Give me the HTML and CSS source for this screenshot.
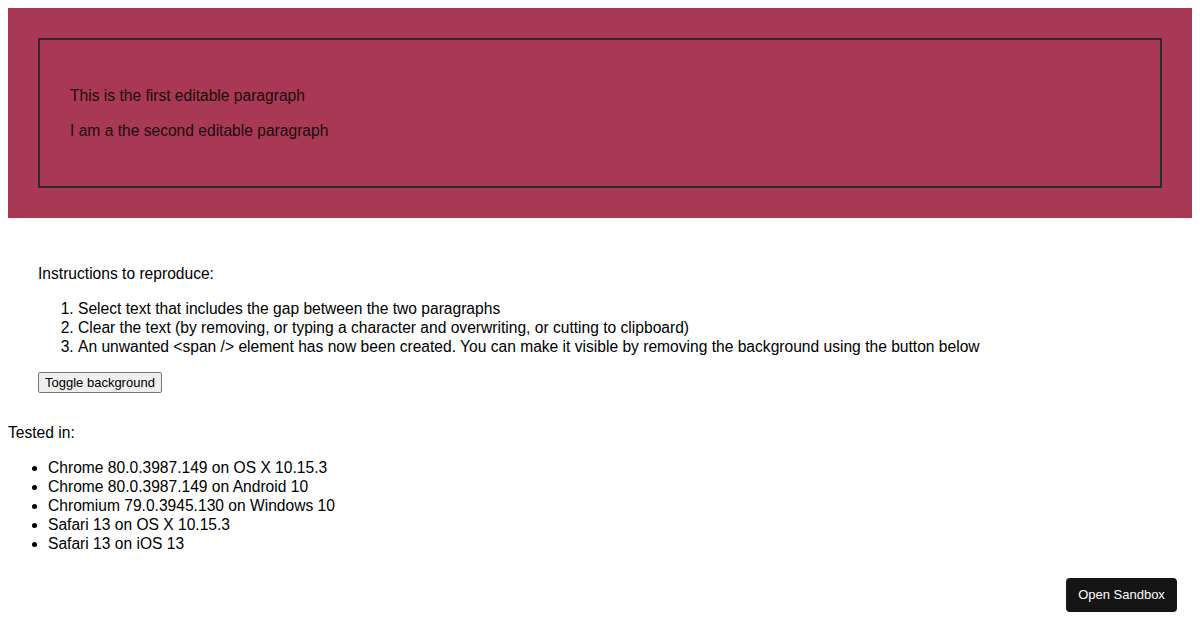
FILE: index.html
```html
<!DOCTYPE html>
<html lang="en">
<head>
<meta charset="utf-8">
<title>Editable paragraphs</title>
<link rel="stylesheet" href="styles.css">
</head>
<body>
<div class="stage">
  <div class="editor">
    <p>This is the first editable paragraph</p>
    <p>I am a the second editable paragraph</p>
  </div>
</div>
<div class="instructions">
  <p>Instructions to reproduce:</p>
  <ol>
    <li>Select text that includes the gap between the two paragraphs</li>
    <li>Clear the text (by removing, or typing a character and overwriting, or cutting to clipboard)</li>
    <li>An unwanted &lt;span /&gt; element has now been created. You can make it visible by removing the background using the button below</li>
  </ol>
  <button class="toggle" type="button">Toggle background</button>
</div>
<div class="tested">Tested in:</div>
<ul class="browsers">
  <li>Chrome 80.0.3987.149 on OS X 10.15.3</li>
  <li>Chrome 80.0.3987.149 on Android 10</li>
  <li>Chromium 79.0.3945.130 on Windows 10</li>
  <li>Safari 13 on OS X 10.15.3</li>
  <li>Safari 13 on iOS 13</li>
</ul>
<a class="open-sandbox" href="#">Open Sandbox</a>
</body>
</html>
```

FILE: styles.css
```css
html, body {
  background: #ffffff;
}
body {
  margin: 8px;
  font-family: "Liberation Sans", Arial, sans-serif;
  font-size: 15.6px;
  line-height: 19px;
  color: #000000;
}
p {
  margin: 16px 0;
}
.stage {
  background: #a83853;
  padding: 30px;
}
.editor {
  border: 2px solid #2b2b2b;
  padding: 30px;
  color: #1a0a0e;
}
.instructions {
  padding: 30px;
}
.instructions ol {
  margin: 16px 0;
  padding-left: 40px;
}
.toggle {
  display: block;
  height: 21px;
  margin: 0;
  padding: 1px 6px;
  font-family: "Liberation Sans", Arial, sans-serif;
  font-size: 13px;
  line-height: 15px;
  color: #000000;
  background: #efefef;
  border: 1px solid #767676;
  border-radius: 2px;
}
.browsers {
  margin: 16px 0;
  padding-left: 40px;
}
.open-sandbox {
  position: fixed;
  right: 23px;
  bottom: 18px;
  width: 111px;
  height: 34px;
  display: flex;
  align-items: center;
  justify-content: center;
  padding-bottom: 1px;
  box-sizing: border-box;
  background: #151515;
  color: #ffffff;
  border-radius: 4px;
  font-family: "Liberation Sans", Arial, sans-serif;
  font-size: 13px;
  text-decoration: none;
}
```
